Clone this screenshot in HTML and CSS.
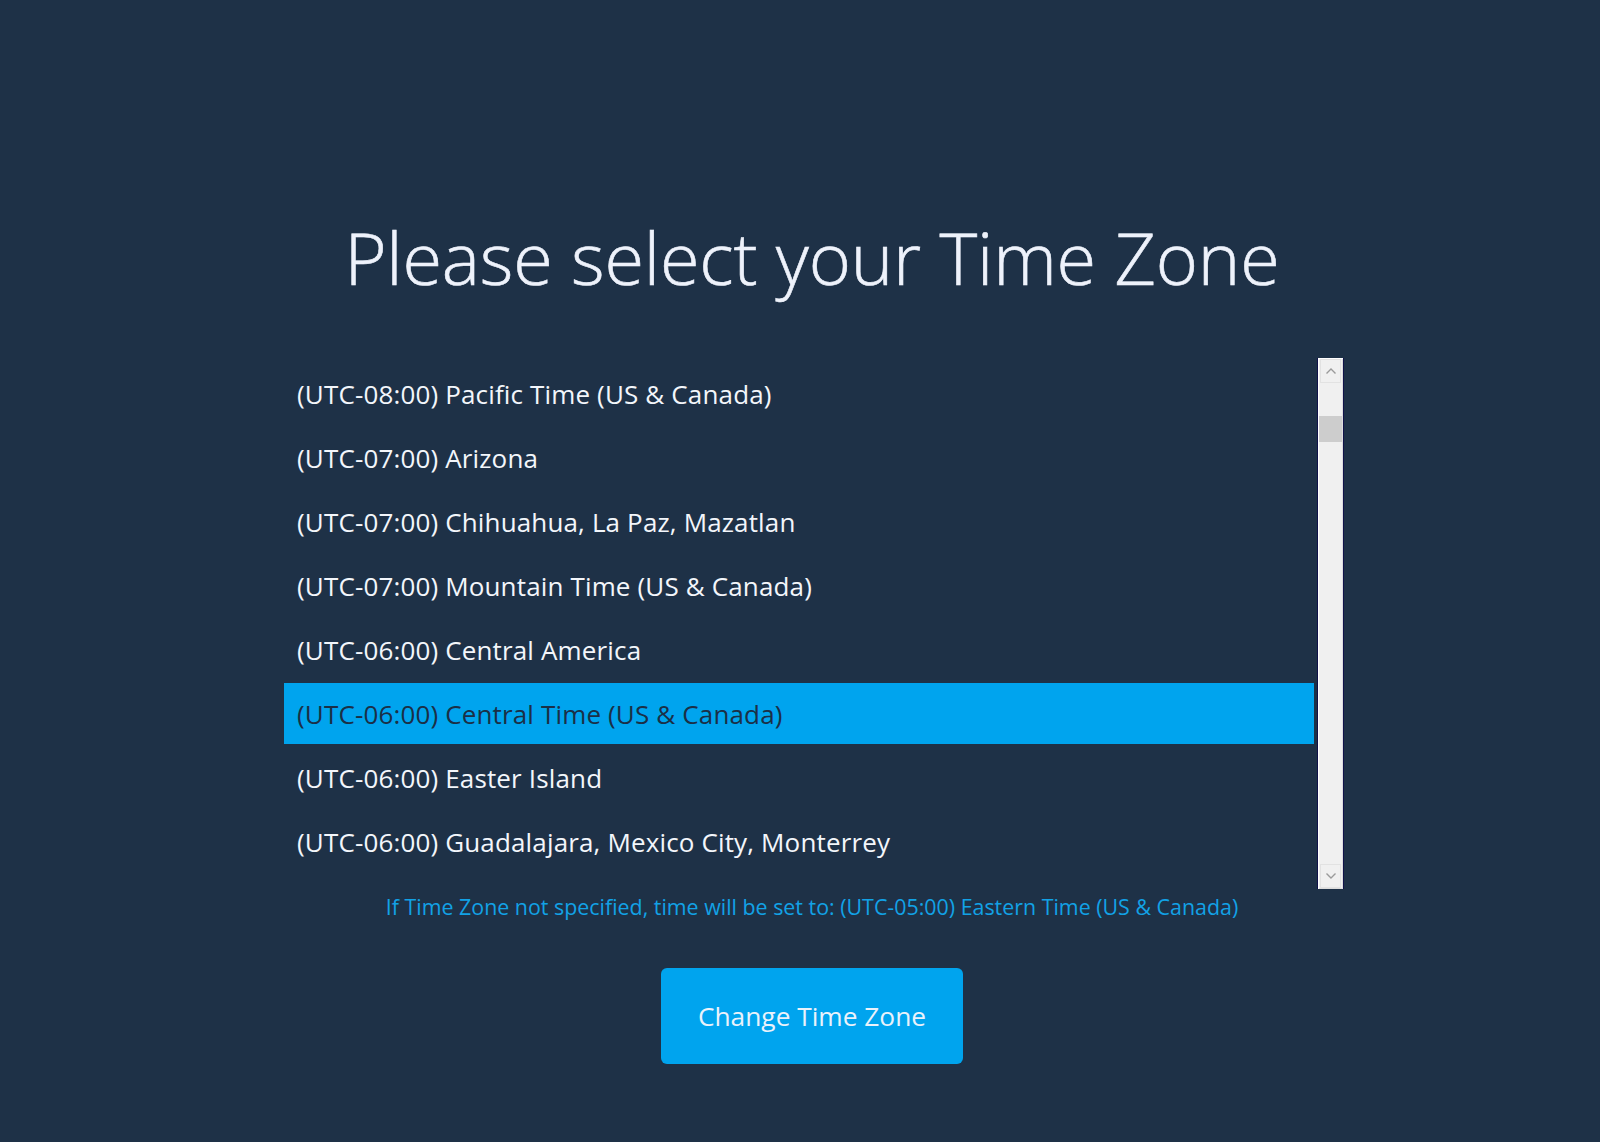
FILE: index.html
```html
<!DOCTYPE html>
<html lang="en">
<head>
<meta charset="utf-8">
<title>Time Zone</title>
<link rel="stylesheet" href="styles.css">
</head>
<body>
<main class="page">
  <h1 class="title">Please select your Time Zone</h1>
  <div class="listbox" role="listbox">
    <div class="options">
      <div class="option">(UTC-08:00) Pacific Time (US &amp; Canada)</div>
      <div class="option">(UTC-07:00) Arizona</div>
      <div class="option">(UTC-07:00) Chihuahua, La Paz, Mazatlan</div>
      <div class="option">(UTC-07:00) Mountain Time (US &amp; Canada)</div>
      <div class="option">(UTC-06:00) Central America</div>
      <div class="option selected">(UTC-06:00) Central Time (US &amp; Canada)</div>
      <div class="option">(UTC-06:00) Easter Island</div>
      <div class="option">(UTC-06:00) Guadalajara, Mexico City, Monterrey</div>
    </div>
    <div class="scrollbar">
      <div class="sb-btn">
        <svg width="12" height="8" viewBox="0 0 12 8"><path d="M1.5 6.5 L6 2 L10.5 6.5" fill="none" stroke="#9a9a9a" stroke-width="1.4"/></svg>
      </div>
      <div class="sb-track">
        <div class="sb-thumb"></div>
      </div>
      <div class="sb-btn">
        <svg width="12" height="8" viewBox="0 0 12 8"><path d="M1.5 1.5 L6 6 L10.5 1.5" fill="none" stroke="#9a9a9a" stroke-width="1.4"/></svg>
      </div>
    </div>
  </div>
  <p class="note">If Time Zone not specified, time will be set to: (UTC-05:00) Eastern Time (US &amp; Canada)</p>
  <button class="btn" type="button">Change Time Zone</button>
</main>
</body>
</html>
```

FILE: styles.css
```css
html, body {
  margin: 0;
  padding: 0;
  height: 100%;
  background: #1e3147;
}
body {
  font-family: "Open Sans", "Noto Sans", sans-serif;
  overflow: hidden;
}
.page {
  display: flex;
  flex-direction: column;
  align-items: center;
  padding: 212px 0 0 24px;
  box-sizing: border-box;
  width: 1600px;
}
.title {
  margin: 0;
  height: 90px;
  font-size: 72px;
  line-height: 90px;
  font-weight: 300;
  color: #eef2fb;
  letter-spacing: -0.17px;
  -webkit-text-stroke: 0.6px #eef2fb;
  white-space: nowrap;
}
.listbox {
  margin-top: 56px;
  width: 1060px;
  height: 531px;
  display: flex;
  box-sizing: border-box;
  margin-left: 4px;
}
.options {
  flex: 1;
  padding-top: 5px;
  display: flex;
  flex-direction: column;
  gap: 3px;
  overflow: hidden;
}
.option {
  height: 61px;
  flex: none;
  display: flex;
  align-items: center;
  padding-left: 13px;
  font-size: 26px;
  color: #f3f6fb;
  white-space: nowrap;
  letter-spacing: 0.15px;
}
.option.selected {
  background: #00a4ee;
  color: #1b2f46;
  margin-right: 3px;
}
.scrollbar {
  width: 27px;
  flex: none;
  box-sizing: border-box;
  border-left: 1px solid #10124a;
  border-right: 1px solid #10124a;
  background: #f0f0f0;
  display: flex;
  flex-direction: column;
  box-shadow: inset 1px 1px 0 #ffffff, inset -1px -1px 0 #dcdcdc;
}
.sb-btn {
  height: 24px;
  flex: none;
  display: flex;
  align-items: center;
  justify-content: center;
  margin: 1px 2px;
  border: 1px solid #e2e2e2;
  background: #f0f0f0;
  box-sizing: border-box;
}
.sb-track {
  flex: 1;
  padding-top: 32px;
}
.sb-thumb {
  height: 26px;
  margin: 0 1px;
  background: #cdcdcd;
}
.note {
  margin: 0;
  height: 36px;
  line-height: 36px;
  font-size: 21.4px;
  color: #12a2e6;
  white-space: nowrap;
}
.btn {
  margin-top: 43px;
  width: 302px;
  height: 96px;
  border: none;
  border-radius: 6px;
  background: #00a4ee;
  color: #eaf2fb;
  font-family: "Open Sans", "Noto Sans", sans-serif;
  font-size: 26.3px;
  cursor: pointer;
}
```
